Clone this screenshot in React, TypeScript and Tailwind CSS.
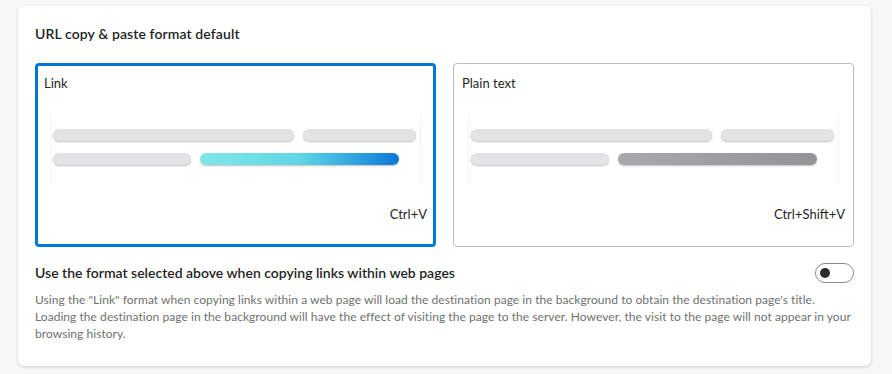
import { useState } from 'react';

const font = { fontFamily: 'Lato, "Noto Sans", sans-serif' };

function Bar({ className }: { className: string }) {
  return <div className={`h-3 rounded-full shadow-[0_1px_2px_rgba(0,0,0,0.25)] ${className}`} />;
}

function FormatOption({
  label,
  shortcut,
  selected,
  accent,
}: {
  label: string;
  shortcut: string;
  selected: boolean;
  accent: string;
}) {
  return (
    <div
      className={`flex-1 h-[184px] flex flex-col rounded-[4px] ${
        selected ? 'border-[3px] border-[#0078d4] px-[6px] pt-[7px] pb-[20px]' : 'border border-[#bdbdbd] px-[8px] pt-[9px] pb-[22px]'
      }`}
    >
      <div className="text-[13px] text-[#1f1f1f] leading-5">{label}</div>
      <div className="mt-[20px] mx-[6px] border-x border-[#f3f3f3] pt-[16px] pb-[20px] px-[2px] flex flex-col gap-[12px]">
        <div className="flex gap-[9px] pr-[2px]">
          <Bar className="w-[241px] bg-[#e3e2e5]" />
          <Bar className="flex-1 bg-[#e3e2e5]" />
        </div>
        <div className="flex gap-[9px] pr-[19px]">
          <Bar className="w-[138px] bg-[#e3e2e5]" />
          <Bar className={`flex-1 ${accent}`} />
        </div>
      </div>
      <div className="mt-auto text-right text-[13px] text-[#1f1f1f] leading-5">{shortcut}</div>
    </div>
  );
}

export default function App() {
  const [on, setOn] = useState(false);

  return (
    <div className="min-h-[374px] bg-[#f7f7f7] pt-[6px] px-[18px] pb-[10px]" style={font}>
      <div className="w-[853px] bg-white rounded-[6px] shadow-[0_1px_3px_rgba(0,0,0,0.18)] px-[17px] pt-[18px] pb-[24px]">
        <h2 className="text-[14px] font-semibold text-[#1f1f1f] leading-5 tracking-[0.1px]">URL copy &amp; paste format default</h2>

        <div className="mt-[19px] flex gap-[17px]">
          <FormatOption
            label="Link"
            shortcut="Ctrl+V"
            selected
            accent="bg-gradient-to-r from-[#80e6e8] via-[#5fd6e6] to-[#0a78d6]"
          />
          <FormatOption
            label="Plain text"
            shortcut="Ctrl+Shift+V"
            selected={false}
            accent="bg-gradient-to-r from-[#a9a9ab] to-[#949496]"
          />
        </div>

        <div className="mt-[16px] flex items-center justify-between">
          <div className="text-[14px] font-semibold text-[#1f1f1f] leading-5">
            Use the format selected above when copying links within web pages
          </div>
          <button
            onClick={() => setOn(!on)}
            className={`w-[39px] h-[20px] rounded-full border flex items-center px-[4px] ${
              on ? 'bg-[#0078d4] border-[#0078d4] justify-end' : 'bg-white border-[#8a8a8a] justify-start'
            }`}
            aria-label="Use the format selected above"
          >
            <span className={`w-[10px] h-[10px] rounded-full ${on ? 'bg-white' : 'bg-[#2b2b2b]'}`} />
          </button>
        </div>

        <p className="mt-[8px] text-[12px] leading-[17px] tracking-[0.05px] text-[#707070]">
          Using the "Link" format when copying links within a web page will load the destination page in the background to obtain the destination page's title. Loading the destination page in the background will have the effect of visiting the page to the server. However, the visit to the page will not appear in your browsing history.
        </p>
      </div>
    </div>
  );
}
